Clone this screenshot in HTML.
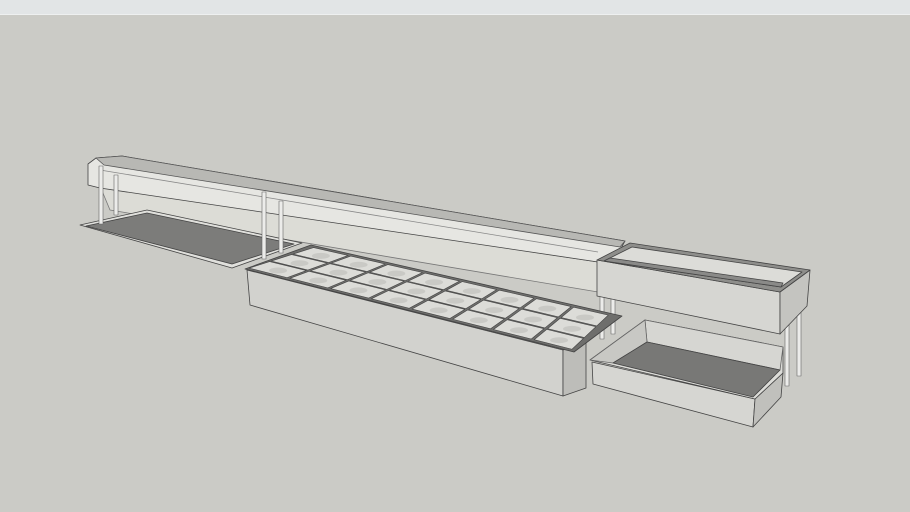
<!DOCTYPE html>
<html><head><style>
html,body{margin:0;padding:0;width:910px;height:512px;overflow:hidden;background:#cbcbc6}
#top{position:absolute;left:0;top:0;width:910px;height:14px;background:#e2e5e6;border-bottom:1px solid #eef0f0}
svg{position:absolute;left:0;top:0}
</style></head><body>
<div id="top"></div>
<svg width="910" height="512" viewBox="0 0 910 512" stroke="#444" stroke-width="0.8" stroke-linejoin="round">
<!-- glass panel -->
<polygon points="100,186 598,262 598,292 110,210" fill="#dcdcd6" stroke="#777"/>
<line x1="130" y1="176" x2="598" y2="250" stroke="#999"/>
<!-- canopy -->
<polygon points="88,164 96,158 122,156 625,241 620,250 598,262 100,188 88,185" fill="#e6e6e2"/>
<polygon points="96,158 122,156 625,241 620,247 104,165" fill="#b8b8b4" stroke="#555"/>
<line x1="100" y1="170" x2="598" y2="252" stroke="#888"/>
<!-- left tray -->
<polygon points="80,225 147,210 302,243 232,268" fill="#e0e0dc"/>
<polygon points="86,226 147,213 294,244 232,264" fill="#7c7c7a"/>
<!-- posts -->
<g fill="#ececea" stroke="#666" stroke-width="0.6">
<rect x="99" y="166" width="4" height="58"/><rect x="114" y="175" width="4" height="40"/>
<rect x="262" y="192" width="4" height="67"/><rect x="279" y="201" width="4" height="52"/>
<rect x="600" y="262" width="4" height="77"/><rect x="611" y="268" width="4" height="66"/>
</g>
<!-- pan box -->
<polygon points="247,270 250,305 563,396 563,350" fill="#d2d2ce"/>
<polygon points="563,350 563,396 586,388 586,342" fill="#bdbdb9"/>
<polygon points="245,269 311,245 622,316 574,352" fill="#6e6e6c"/>
<g id="grid"></g>
<!-- lower tray -->
<polygon points="592,362 593,384 753,427 755,399" fill="#d6d6d2"/>
<polygon points="755,399 783,373 781,397 753,427" fill="#c0c0bc"/>
<polygon points="590,360 645,320 783,347 783,373 755,399" fill="#dcdcd8"/>
<polygon points="645,320 783,347 780,370 647,342" fill="#d6d6d2" stroke="#666"/>
<polygon points="590,360 645,320 647,342 613,363" fill="#c8c8c4" stroke="#666"/>
<polygon points="613,363 647,342 780,370 753,397" fill="#787876"/>
<!-- right posts -->
<g fill="#ececea" stroke="#666" stroke-width="0.6">
<rect x="785" y="290" width="4" height="96"/><rect x="797" y="284" width="4" height="92"/>
</g>
<!-- right upper box -->
<polygon points="597,260 597,296 780,334 780,292" fill="#d6d6d2"/>
<polygon points="780,292 810,270 807,306 780,334" fill="#c4c4c0"/>
<polygon points="597,260 630,243 810,270 780,292" fill="#8e8e8b"/>
<polygon points="604,261 632,247 802,272 781,287" fill="#dcdcd8"/>
<polygon points="604,261 781,287 783,283 610,258" fill="#8a8a88"/>
</svg>
<script>
var g=document.getElementById('grid');
var FL=[247,268],BL=[313,247],BR=[610,315],FR=[573,350];
function P(u,v){var ax=FL[0]+(FR[0]-FL[0])*u,ay=FL[1]+(FR[1]-FL[1])*u,bx=BL[0]+(BR[0]-BL[0])*u,by=BL[1]+(BR[1]-BL[1])*u;return [ax+(bx-ax)*v,ay+(by-ay)*v];}
var C=8,R=3,s='';
for(var i=0;i<C;i++)for(var j=0;j<R;j++){var m=0.035;var pts=[P((i+m)/C,(j+m)/R),P((i+1-m)/C,(j+m)/R),P((i+1-m)/C,(j+1-m)/R),P((i+m)/C,(j+1-m)/R)];
var c=P((i+0.5)/C,(j+0.5)/R);
s+='<polygon points="'+pts.map(function(p){return p.join(',')}).join(' ')+'" fill="#dcdcd8" stroke="#444" stroke-width="0.6"/>';
s+='<ellipse cx="'+c[0]+'" cy="'+(c[1]+1)+'" rx="9" ry="3" fill="#c9c9c5" stroke="none"/>';}
g.innerHTML=s;
</script>
</body></html>
